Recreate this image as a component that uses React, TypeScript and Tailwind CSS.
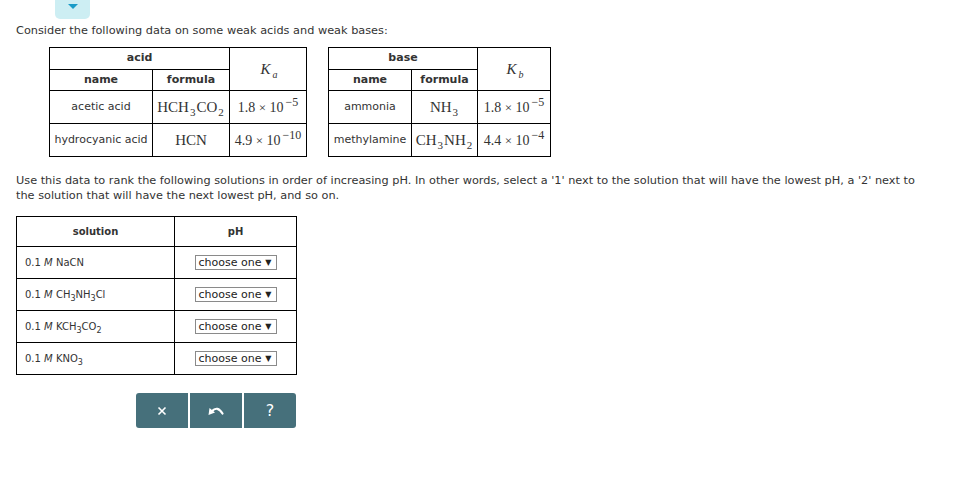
import React from 'react';

const sans = { fontFamily: '"DejaVu Sans", Verdana, sans-serif' };
const serif = { fontFamily: '"Liberation Serif", "Times New Roman", serif' };

function Sci({ m, e }: { m: string; e: string }) {
  return (
    <span style={serif} className="text-[14px] text-[#333] whitespace-nowrap">
      {m} <span className="text-[13px]">×</span> 10
      <span className="relative -top-[6px] text-[12px] ml-[2px]">−{e}</span>
    </span>
  );
}

function Sub({ children }: { children: React.ReactNode }) {
  return <span className="relative top-[4px] text-[11px] px-[1px]">{children}</span>;
}

function K({ s }: { s: string }) {
  return (
    <span style={serif} className="italic font-normal text-[15px] text-[#333]">
      K<span className="relative top-[4px] left-[2px] text-[10px]">{s}</span>
    </span>
  );
}

const cell = 'border border-black text-center p-0';

function DataTable({
  title,
  kLabel,
  widths,
  rows,
}: {
  title: string;
  kLabel: string;
  widths: [string, string, string];
  rows: { name: string; formula: React.ReactNode; k: React.ReactNode }[];
}) {
  return (
    <table className="border-collapse table-fixed text-[11px] text-[#333]" style={sans}>
      <colgroup>
        <col className={widths[0]} />
        <col className={widths[1]} />
        <col className={widths[2]} />
      </colgroup>
      <tbody>
        <tr className="h-[22px]">
          <th colSpan={2} className={`${cell} font-bold`}>
            {title}
          </th>
          <th rowSpan={2} className={`${cell} font-normal`}>
            <K s={kLabel} />
          </th>
        </tr>
        <tr className="h-[21px]">
          <th className={`${cell} font-bold`}>name</th>
          <th className={`${cell} font-bold`}>formula</th>
        </tr>
        {rows.map((r) => (
          <tr key={r.name} className="h-[33px]">
            <td className={`${cell} whitespace-nowrap`}>{r.name}</td>
            <td className={cell}>
              <span style={serif} className="text-[15px] text-[#333] whitespace-nowrap">
                {r.formula}
              </span>
            </td>
            <td className={cell}>{r.k}</td>
          </tr>
        ))}
      </tbody>
    </table>
  );
}

function Select() {
  return (
    <div className="inline-flex items-center justify-between w-[82px] h-[15px] border border-[#8a8a8a] bg-white pl-[3px] pr-[4px] text-[11px] leading-none text-[#222]" style={sans}>
      <span>choose one</span>
      <span className="text-[8px]">▼</span>
    </div>
  );
}

function SSub({ children }: { children: React.ReactNode }) {
  return <span className="relative top-[3px] text-[8px]">{children}</span>;
}

const solutions: React.ReactNode[] = [
  <>NaCN</>,
  <>
    CH<SSub>3</SSub>NH<SSub>3</SSub>Cl
  </>,
  <>
    KCH<SSub>3</SSub>CO<SSub>2</SSub>
  </>,
  <>
    KNO<SSub>3</SSub>
  </>,
];

export default function App() {
  return (
    <div className="w-[954px] h-[487px] bg-white relative text-[#333]" style={sans}>
      {/* collapse tab */}
      <div className="absolute left-[55px] top-0 w-[35px] h-[19px] bg-[#cdeef3] rounded-b-[5px] flex justify-center pt-[4px]">
        <div className="w-0 h-0 border-l-[5px] border-r-[5px] border-t-[5px] border-l-transparent border-r-transparent border-t-[#1a9bc7]" />
      </div>

      <div className="pl-4 pt-[23px]">
        <p className="text-[11.3px] leading-[15px]">Consider the following data on some weak acids and weak bases:</p>

        <div className="flex gap-[21px] ml-[33px] mt-[9px]">
          <DataTable
            title="acid"
            kLabel="a"
            widths={['w-[103px]', 'w-[77px]', 'w-[77px]']}
            rows={[
              {
                name: 'acetic acid',
                formula: (
                  <>
                    HCH<Sub>3</Sub>CO<Sub>2</Sub>
                  </>
                ),
                k: <Sci m="1.8" e="5" />,
              },
              { name: 'hydrocyanic acid', formula: <>HCN</>, k: <Sci m="4.9" e="10" /> },
            ]}
          />
          <DataTable
            title="base"
            kLabel="b"
            widths={['w-[83px]', 'w-[66px]', 'w-[73px]']}
            rows={[
              {
                name: 'ammonia',
                formula: (
                  <>
                    NH<Sub>3</Sub>
                  </>
                ),
                k: <Sci m="1.8" e="5" />,
              },
              {
                name: 'methylamine',
                formula: (
                  <>
                    CH<Sub>3</Sub>NH<Sub>2</Sub>
                  </>
                ),
                k: <Sci m="4.4" e="4" />,
              },
            ]}
          />
        </div>

        <p className="text-[11.3px] leading-[15px] mt-[16px] w-[910px]">
          Use this data to rank the following solutions in order of increasing pH. In other words, select a '1' next to the solution that will have the lowest pH, a '2' next to the solution that will have the next lowest pH, and so on.
        </p>

        <table className="border-collapse table-fixed mt-[13px] text-[10px]">
          <colgroup>
            <col className="w-[158px]" />
            <col className="w-[122px]" />
          </colgroup>
          <tbody>
            <tr className="h-[30px]">
              <th className="border border-black font-bold text-[10px]">solution</th>
              <th className="border border-black font-bold text-[10px]">pH</th>
            </tr>
            {solutions.map((s, i) => (
              <tr key={i} className="h-[32px]">
                <td className="border border-black pl-[8px] text-left whitespace-nowrap">
                  0.1 <span className="italic">M</span> {s}
                </td>
                <td className="border border-black text-center">
                  <Select />
                </td>
              </tr>
            ))}
          </tbody>
        </table>

        <div className="ml-[120px] mt-[18px] flex w-[160px] h-[35px] rounded-[3px] overflow-hidden bg-[#46707b] text-white">
          <div className="flex-1 flex items-center justify-center border-r-2 border-white">
            <svg width="10" height="10" viewBox="0 0 10 10">
              <path d="M1.5 1.5 L8.5 8.5 M8.5 1.5 L1.5 8.5" stroke="white" strokeWidth="1.6" />
            </svg>
          </div>
          <div className="flex-1 flex items-center justify-center border-r-2 border-white">
            <svg width="18" height="12" viewBox="0 0 18 12">
              <path d="M5 6 Q10.5 0.5 15.5 8.5" stroke="white" strokeWidth="2.2" fill="none" strokeLinecap="round" />
              <path d="M1.5 10 L2.5 3 L8 7.5 Z" fill="white" />
            </svg>
          </div>
          <div className="flex-1 flex items-center justify-center text-[16px] font-normal">?</div>
        </div>
      </div>
    </div>
  );
}
